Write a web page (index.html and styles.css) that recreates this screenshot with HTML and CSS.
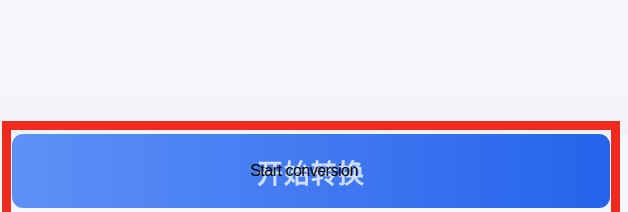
FILE: index.html
```html
<!DOCTYPE html>
<html lang="zh-CN">
<head>
  <meta charset="UTF-8">
  <meta name="viewport" content="width=device-width, initial-scale=1.0">
  <title>开始转换</title>
  <link rel="stylesheet" href="styles.css">
</head>
<body>
  <div class="page">
    <div class="content"></div>
    <div class="actions">
      <button class="btn-convert" type="button">
        <span class="label-zh">开始转换</span>
        <span class="label-en">Start conversion</span>
      </button>
      <div class="highlight"></div>
    </div>
  </div>
</body>
</html>
```

FILE: styles.css
```css
:root {
  --bg: #f5f6fa;
  --blue-light: #5f90f7;
  --blue-dark: #2563eb;
  --mark: #f02a1f;
}
* { box-sizing: border-box; }
html, body {
  margin: 0;
  height: 100%;
}
body {
  background: var(--bg);
  font-family: "Noto Sans CJK SC", "Liberation Sans", sans-serif;
  overflow: hidden;
}
.page {
  display: flex;
  flex-direction: column;
  height: 212px;
}
.content {
  height: 134px;
  background: linear-gradient(180deg, var(--bg) 0, var(--bg) 95px, #eff1f6 134px);
}
.actions {
  position: relative;
  padding: 0 18px 0 12px;
}
.btn-convert {
  position: relative;
  display: flex;
  align-items: center;
  justify-content: center;
  width: 100%;
  height: 74px;
  border: none;
  border-radius: 11px;
  background: linear-gradient(90deg, var(--blue-light), var(--blue-dark));
  box-shadow: 0 0 0 1px rgba(255,255,255,0.6);
  cursor: pointer;
  padding: 0;
}
.label-zh {
  color: rgba(255,255,255,0.75);
  font-size: 26px;
  font-weight: 700;
  letter-spacing: 1px;
  filter: blur(0.7px);
}
.label-en {
  position: absolute;
  left: 0;
  right: 0;
  top: 28px;
  text-align: center;
  font-family: "Liberation Sans", Arial, sans-serif;
  font-size: 16px;
  color: #000;
  letter-spacing: -0.5px;
  padding-right: 14px;
}
.highlight {
  position: absolute;
  left: 2px;
  top: -13px;
  width: 618px;
  height: 100px;
  border: 9px solid var(--mark);
  pointer-events: none;
}
```
